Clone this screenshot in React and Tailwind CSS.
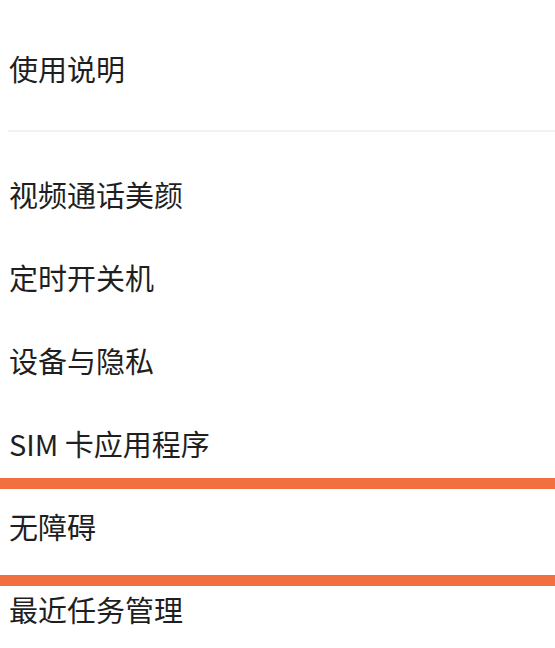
import React from "react";

const items = ["视频通话美颜", "定时开关机", "设备与隐私", "SIM 卡应用程序", "无障碍", "最近任务管理"];

const Row = ({ label, marked }) => (
  <div className="relative h-[83px] flex items-center pl-[9px]">
    <span className="text-[29px] leading-none text-[#1f1f1f]">{label}</span>
    {marked && (
      <div className="absolute left-0 right-0 top-[-7px] h-[108px] border-y-[11px] border-[#f2703f]" />
    )}
  </div>
);

export default function App() {
  return (
    <div
      className="w-full h-[648px] overflow-hidden bg-white"
      style={{ fontFamily: '"Noto Sans CJK SC", "Noto Sans", sans-serif' }}
    >
      <div className="h-[130px] pt-[6px] flex items-center pl-[9px]">
        <span className="text-[29px] leading-none text-[#1f1f1f]">使用说明</span>
      </div>
      <div className="ml-[8px] h-[2px] bg-[#f2f2f2]" />
      <div className="pt-[21px]">
        {items.map((label) => (
          <Row key={label} label={label} marked={label === "无障碍"} />
        ))}
      </div>
    </div>
  );
}
